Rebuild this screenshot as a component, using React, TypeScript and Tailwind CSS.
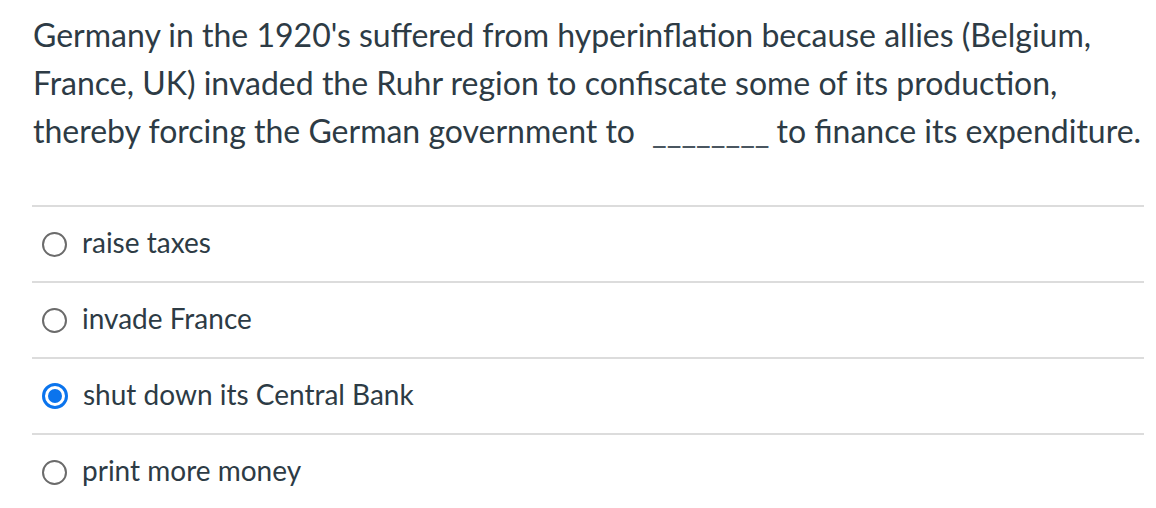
import { useState } from 'react'

const options = ['raise taxes', 'invade France', 'shut down its Central Bank', 'print more money']

function Radio({ checked }: { checked: boolean }) {
  if (checked) {
    return (
      <span className="w-[26px] h-[26px] rounded-full border-[3px] border-[#0b74ed] flex items-center justify-center shrink-0">
        <span className="w-[14px] h-[14px] rounded-full bg-[#0b74ed]" />
      </span>
    )
  }
  return <span className="w-[25px] h-[25px] rounded-full border-2 border-[#6b6b6b] shrink-0" />
}

export default function App() {
  const [selected, setSelected] = useState(2)

  return (
    <div className="bg-white w-[1156px] h-[508px] pl-[33px] pr-[12px] pt-[11px] text-[#2d3b45] font-['Lato',sans-serif]">
      <p className="text-[32px] leading-[48px] w-[1120px]">
        Germany in the 1920's suffered from hyperinflation because allies (Belgium, France, UK) invaded the Ruhr
        region to confiscate some of its production, thereby forcing the German government to
        <span className="ml-[17px] mr-[7px] text-[#4a5660]">________</span>
        to finance its expenditure.
      </p>

      <div className="mt-[50px] -ml-[1px]">
        {options.map((opt, i) => (
          <button
            key={opt}
            type="button"
            onClick={() => setSelected(i)}
            className="w-full h-[76px] flex items-center gap-[15px] pl-[10px] border-t-2 border-[#dcdcdc] text-left"
          >
            <Radio checked={selected === i} />
            <span className="text-[28px] pb-[4px]">{opt}</span>
          </button>
        ))}
      </div>
    </div>
  )
}
